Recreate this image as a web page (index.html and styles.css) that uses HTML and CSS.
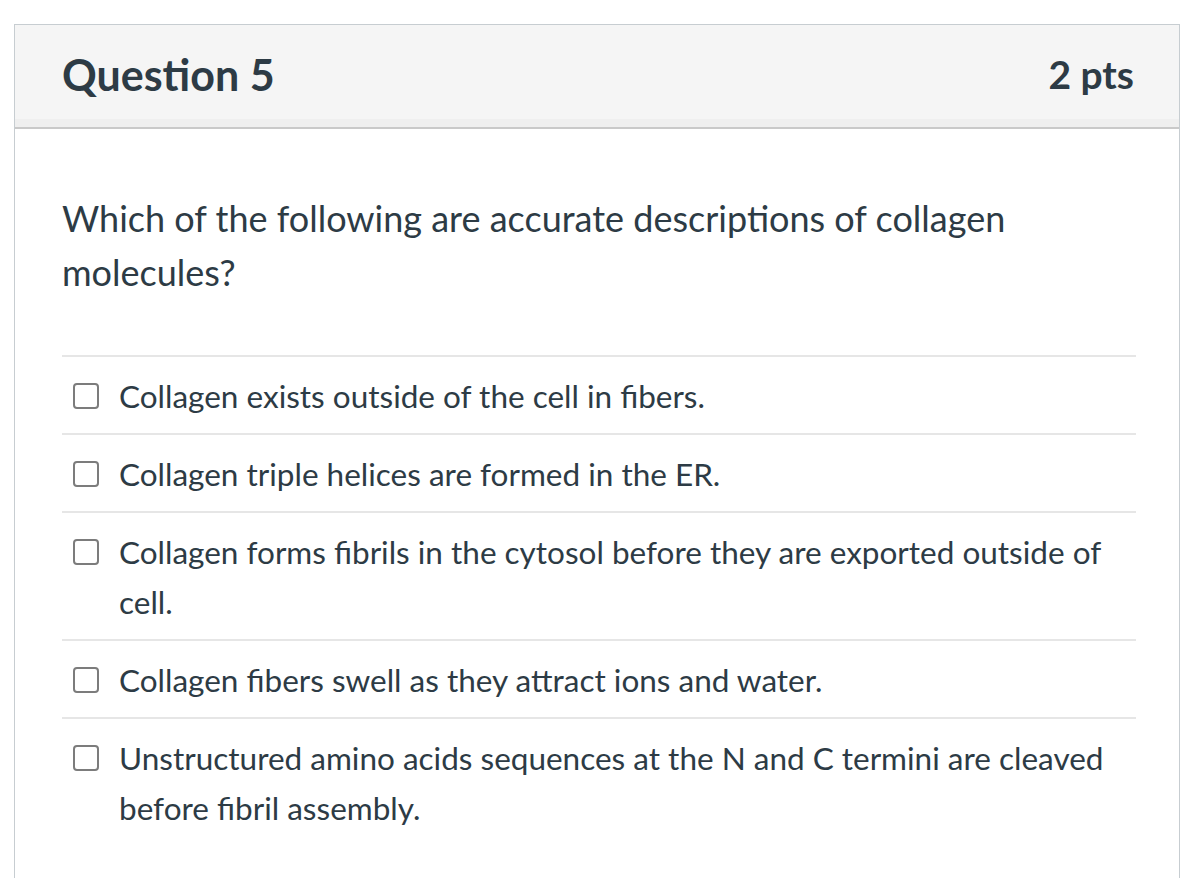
FILE: index.html
```html
<!DOCTYPE html>
<html lang="en">
<head>
<meta charset="utf-8">
<title>Question 5</title>
<link rel="stylesheet" href="styles.css">
</head>
<body>
<div class="card">
  <div class="header">
    <h2 class="title">Question 5</h2>
    <span class="pts">2 pts</span>
  </div>
  <div class="content">
    <p class="question">Which of the following are accurate descriptions of collagen molecules?</p>
    <div class="answers">
      <label class="answer"><span class="box"></span><span class="text">Collagen exists outside of the cell in fibers.</span></label>
      <label class="answer"><span class="box"></span><span class="text">Collagen triple helices are formed in the ER.</span></label>
      <label class="answer"><span class="box"></span><span class="text">Collagen forms fibrils in the cytosol before they are exported outside of cell.</span></label>
      <label class="answer"><span class="box"></span><span class="text">Collagen fibers swell as they attract ions and water.</span></label>
      <label class="answer"><span class="box"></span><span class="text">Unstructured amino acids sequences at the N and C termini are cleaved before fibril assembly.</span></label>
    </div>
  </div>
</div>
</body>
</html>
```

FILE: styles.css
```css
html, body {
  margin: 0;
  padding: 0;
  background: #ffffff;
}

body {
  font-family: Lato, "Open Sans", "Liberation Sans", sans-serif;
  color: #2d3b45;
  overflow: hidden;
}

.card {
  margin: 24px 0 0 14px;
  width: 1164px;
  min-height: 900px;
  border: 1px solid #c7cdd1;
  border-bottom: none;
  background: #ffffff;
}

.header {
  height: 102px;
  display: flex;
  justify-content: space-between;
  align-items: center;
  padding: 0 45px 0 47px;
  background: #f5f5f5;
  box-shadow: inset 0 -8px 0 #efefef;
  border-bottom: 2px solid #c9c9c9;
}

.title {
  margin: 0;
  font-size: 43px;
  font-weight: 700;
  color: #2d3b45;
  padding-bottom: 4px;
}

.pts {
  font-size: 39px;
  font-weight: 700;
  color: #2d3b45;
  padding-bottom: 4px;
}

.content {
  padding: 62px 43px 0 47px;
}

.question {
  margin: 0 0 56px 0;
  font-size: 36px;
  line-height: 54px;
}

.answers {
  display: flex;
  flex-direction: column;
}

.answer {
  display: flex;
  align-items: flex-start;
  gap: 20px;
  padding: 14px 0 12px 11px;
  border-top: 2px solid #e6e6e6;
  font-size: 31.5px;
  line-height: 50px;
}

.box {
  flex: none;
  width: 22px;
  height: 22px;
  margin-top: 12px;
  border: 2px solid #7c7c7c;
  border-radius: 4px;
  background: #ffffff;
}

.text {
  flex: 1;
}
```
